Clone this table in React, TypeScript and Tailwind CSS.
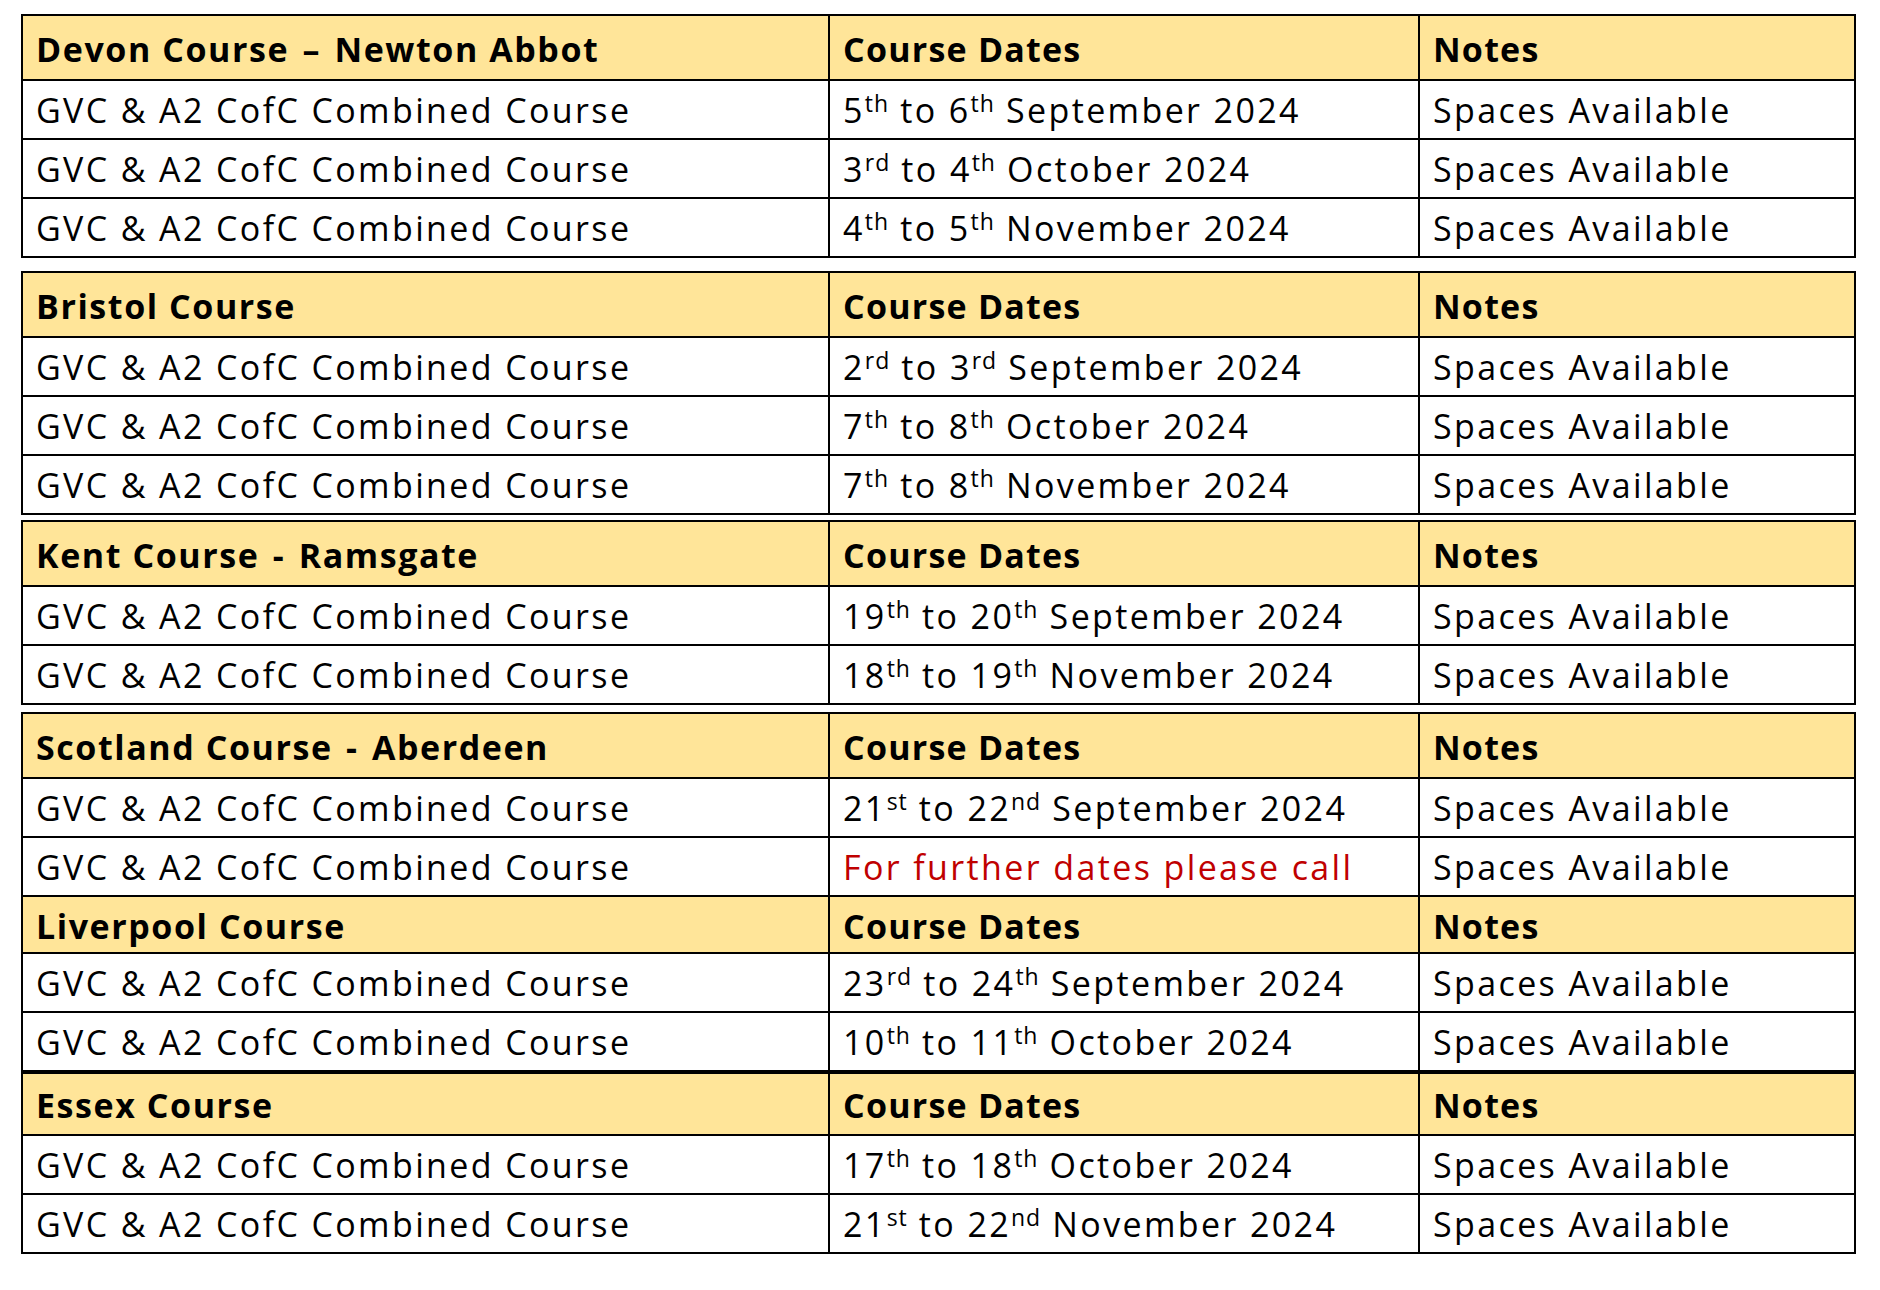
import React from "react";

type DateParts = { from: string; fromSup: string; to: string; toSup: string; rest: string };

type Course = {
  dates?: DateParts;
  call?: string;
};

type Section = {
  title: string;
  headerHeight: string;
  thickTop?: boolean;
  rows: Course[];
};

const d = (from: string, fromSup: string, to: string, toSup: string, rest: string): Course => ({
  dates: { from, fromSup, to, toSup, rest },
});

const groups: { gap: string; sections: Section[] }[] = [
  {
    gap: "mt-[14px]",
    sections: [
      {
        title: "Devon Course – Newton Abbot",
        headerHeight: "h-[63px]",
        rows: [
          d("5", "th", "6", "th", "September 2024"),
          d("3", "rd", "4", "th", "October 2024"),
          d("4", "th", "5", "th", "November 2024"),
        ],
      },
    ],
  },
  {
    gap: "mt-[13px]",
    sections: [
      {
        title: "Bristol Course",
        headerHeight: "h-[63px]",
        rows: [
          d("2", "rd", "3", "rd", "September 2024"),
          d("7", "th", "8", "th", "October 2024"),
          d("7", "th", "8", "th", "November 2024"),
        ],
      },
    ],
  },
  {
    gap: "mt-[5px]",
    sections: [
      {
        title: "Kent Course - Ramsgate",
        headerHeight: "h-[63px]",
        rows: [d("19", "th", "20", "th", "September 2024"), d("18", "th", "19", "th", "November 2024")],
      },
    ],
  },
  {
    gap: "mt-[7px]",
    sections: [
      {
        title: "Scotland Course - Aberdeen",
        headerHeight: "h-[63px]",
        rows: [d("21", "st", "22", "nd", "September 2024"), { call: "For further dates please call" }],
      },
      {
        title: "Liverpool Course",
        headerHeight: "h-[57px]",
        rows: [d("23", "rd", "24", "th", "September 2024"), d("10", "th", "11", "th", "October 2024")],
      },
      {
        title: "Essex Course",
        headerHeight: "h-[64px]",
        thickTop: true,
        rows: [d("17", "th", "18", "th", "October 2024"), d("21", "st", "22", "nd", "November 2024")],
      },
    ],
  },
];

const cell = "flex items-center pl-[13px] whitespace-nowrap";

const Sup = ({ children }: { children: string }) => (
  <sup className="text-[23px] top-[-11px] tracking-[0.04em]">{children}</sup>
);

const Dates = ({ course }: { course: Course }) => {
  if (course.call) {
    return <span className="text-[#c00000]">{course.call}</span>;
  }
  const p = course.dates!;
  return (
    <span>
      {p.from}
      <Sup>{p.fromSup}</Sup> to {p.to}
      <Sup>{p.toSup}</Sup> {p.rest}
    </span>
  );
};

// title dash gets a bit more room, like the original document
const Title = ({ text }: { text: string }) => {
  const parts = text.split(/ ([–-]) /);
  if (parts.length < 3) return <span>{text}</span>;
  return (
    <span>
      {parts[0]}
      <span className="px-[3px]"> {parts[1]} </span>
      {parts[2]}
    </span>
  );
};

const SectionRows = ({ section, first }: { section: Section; first: boolean }) => {
  const headerBorder = first ? "" : section.thickTop ? "border-t-4 border-black" : "border-t-2 border-black";
  return (
    <>
      <div
        className={`grid grid-cols-[805px_590px_436px] bg-[#ffe599] font-bold tracking-[0.036em] ${section.headerHeight} ${headerBorder}`}
      >
        <div className={`${cell} pt-[2px] tracking-[0.046em]`}>
          <Title text={section.title} />
        </div>
        <div className={`${cell} pt-[2px] border-l-2 border-black`}>Course Dates</div>
        <div className={`${cell} pt-[2px] border-l-2 border-black`}>Notes</div>
      </div>
      {section.rows.map((row, i) => (
        <div
          key={i}
          className="grid grid-cols-[805px_590px_436px] h-[59px] border-t-2 border-black bg-white tracking-[0.07em]"
        >
          <div className={`${cell} pt-[1px]`}>GVC &amp; A2 CofC Combined Course</div>
          <div className={`${cell} pt-[1px] border-l-2 border-black`}>
            <Dates course={row} />
          </div>
          <div className={`${cell} pt-[1px] border-l-2 border-black`}>Spaces Available</div>
        </div>
      ))}
    </>
  );
};

const App = () => {
  return (
    <div className="min-h-screen w-full bg-white text-black font-['Open_Sans',sans-serif] text-[34px] leading-none">
      <div className="pl-[21px] pb-[30px]">
        {groups.map((group, gi) => (
          <div key={gi} className={`${group.gap} w-[1835px] border-2 border-black`}>
            {group.sections.map((section, si) => (
              <SectionRows key={section.title} section={section} first={si === 0} />
            ))}
          </div>
        ))}
      </div>
    </div>
  );
};

export default App;
